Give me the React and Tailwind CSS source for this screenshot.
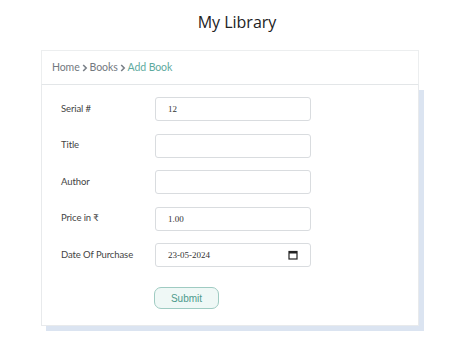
import React from 'react';

const Chevron = () => (
    <svg width="6" height="8" viewBox="0 0 6 8" className="mx-[2px] inline-block">
        <path d="M1.2 1 L4.2 4 L1.2 7" fill="none" stroke="#7a8088" strokeWidth="1.6" />
    </svg>
);

const CalendarIcon = () => (
    <svg width="10" height="10" viewBox="0 0 10 10">
        <rect x="1" y="1.5" width="8" height="7.5" fill="none" stroke="#222" strokeWidth="1.2" />
        <rect x="1" y="1.5" width="8" height="2" fill="#222" />
    </svg>
);

const fields = [
    { label: 'Serial #', value: '12' },
    { label: 'Title', value: '' },
    { label: 'Author', value: '' },
    { label: 'Price in ₹', value: '1.00' },
];

const inputCls = "block w-[156px] h-[24px] border border-[#d9dcdf] rounded-[3px] px-[12px] font-['Liberation_Serif',serif] text-[9px] text-[#333] outline-none";
const labelCls = "w-[113px] pl-[19px] text-[9.5px] tracking-[-0.1px] text-[#444]";

const App = () => {
    return (
        <div className="w-[474px] h-[353px] bg-white font-['Lato','Noto_Sans',sans-serif] text-[#333]">
            <h1 className="pt-[11px] text-center text-[16px] leading-[22px] text-[#222] font-['Open_Sans',sans-serif]">My Library</h1>

            <div className="mt-[17px] ml-[41px] w-[378px]">
                {/* Breadcrumb */}
                <div className="h-[35px] border border-[#eceeef] border-b-[#e3e6e8] px-[10px] flex items-center text-[10.5px] tracking-[-0.1px] text-[#737980]">
                    <span>Home</span>
                    <Chevron />
                    <span>Books</span>
                    <Chevron />
                    <span className="text-[#5eaa9e]">Add Book</span>
                </div>

                {/* Form */}
                <div className="border border-t-0 border-[#e8eaec] bg-white shadow-[5px_5px_0_#dbe4f1] pt-[12px] pb-[16px]">
                    {fields.map(f => (
                        <div key={f.label} className="flex items-center h-[24px] mb-[12.5px]">
                            <label className={labelCls}>{f.label}</label>
                            <input readOnly value={f.value} className={inputCls} />
                        </div>
                    ))}
                    <div className="flex items-center h-[24px]">
                        <label className={labelCls}>Date Of Purchase</label>
                        <div className="relative flex">
                            <input readOnly value="23-05-2024" className={inputCls} />
                            <span className="absolute right-[13px] top-[7px] flex">
                                <CalendarIcon />
                            </span>
                        </div>
                    </div>
                    <div className="mt-[20px] pl-[112px] flex">
                        <button className="w-[65px] h-[22px] rounded-[7px] border border-[#9fcbc2] bg-[#eff8f6] font-['Liberation_Sans',sans-serif] text-[10px] text-[#4d9a8c]">
                            Submit
                        </button>
                    </div>
                </div>
            </div>
        </div>
    );
};

export default App;
